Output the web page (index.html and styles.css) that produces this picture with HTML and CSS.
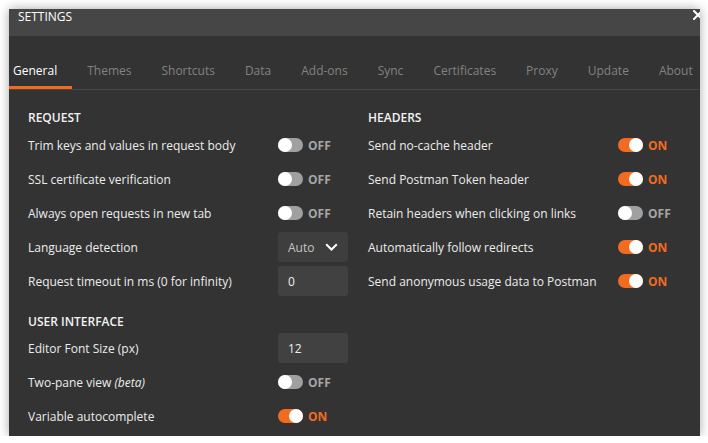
FILE: index.html
```html
<!DOCTYPE html>
<html>
<head>
<meta charset="utf-8">
<title>Settings</title>
<link rel="stylesheet" href="styles.css">
</head>
<body>
<div class="modal">
  <div class="modal-header">
    <span class="modal-title">SETTINGS</span>
    <svg class="close" width="10" height="10" viewBox="0 0 10 10"><path d="M1 1L9 9M9 1L1 9" stroke="#fff" stroke-width="2" stroke-linecap="square" fill="none"/></svg>
  </div>
  <nav class="tabs">
    <span class="tab active">General</span>
    <span class="tab">Themes</span>
    <span class="tab">Shortcuts</span>
    <span class="tab">Data</span>
    <span class="tab">Add-ons</span>
    <span class="tab">Sync</span>
    <span class="tab">Certificates</span>
    <span class="tab">Proxy</span>
    <span class="tab">Update</span>
    <span class="tab">About</span>
  </nav>
  <div class="content">
    <section class="col">
      <h3 class="section-title">REQUEST</h3>
      <div class="row"><span class="label">Trim keys and values in request body</span><span class="toggle"><span class="switch"><span class="knob"></span></span><span class="state">OFF</span></span></div>
      <div class="row"><span class="label">SSL certificate verification</span><span class="toggle"><span class="switch"><span class="knob"></span></span><span class="state">OFF</span></span></div>
      <div class="row"><span class="label">Always open requests in new tab</span><span class="toggle"><span class="switch"><span class="knob"></span></span><span class="state">OFF</span></span></div>
      <div class="row"><span class="label">Language detection</span><span class="select"><span class="select-value">Auto</span><svg class="chevron" width="13" height="8" viewBox="0 0 13 8"><path d="M1.2 1.2L6.5 6.5L11.8 1.2" stroke="#fff" stroke-width="2" fill="none"/></svg></span></div>
      <div class="row"><span class="label">Request timeout in ms (0 for infinity)</span><span class="input">0</span></div>
      <h3 class="section-title spaced">USER INTERFACE</h3>
      <div class="row"><span class="label">Editor Font Size (px)</span><span class="input">12</span></div>
      <div class="row"><span class="label">Two-pane view <em>(beta)</em></span><span class="toggle"><span class="switch"><span class="knob"></span></span><span class="state">OFF</span></span></div>
      <div class="row"><span class="label">Variable autocomplete</span><span class="toggle on"><span class="switch"><span class="knob"></span></span><span class="state">ON</span></span></div>
    </section>
    <section class="col">
      <h3 class="section-title">HEADERS</h3>
      <div class="row"><span class="label">Send no-cache header</span><span class="toggle on"><span class="switch"><span class="knob"></span></span><span class="state">ON</span></span></div>
      <div class="row"><span class="label">Send Postman Token header</span><span class="toggle on"><span class="switch"><span class="knob"></span></span><span class="state">ON</span></span></div>
      <div class="row"><span class="label">Retain headers when clicking on links</span><span class="toggle"><span class="switch"><span class="knob"></span></span><span class="state">OFF</span></span></div>
      <div class="row"><span class="label">Automatically follow redirects</span><span class="toggle on"><span class="switch"><span class="knob"></span></span><span class="state">ON</span></span></div>
      <div class="row"><span class="label">Send anonymous usage data to Postman</span><span class="toggle on"><span class="switch"><span class="knob"></span></span><span class="state">ON</span></span></div>
    </section>
  </div>
</div>
</body>
</html>
```

FILE: styles.css
```css
html, body {
  margin: 0;
  padding: 0;
  background: #ffffff;
}

body {
  font-family: "Open Sans", "Noto Sans", "Liberation Sans", sans-serif;
  font-size: 12px;
}

.modal {
  margin: 9px 0 0 9px;
  width: 691px;
  height: 427px;
  background: #333333;
  box-shadow: 0 0 10px rgba(0, 0, 0, 0.35);
  overflow: hidden;
  display: flex;
  flex-direction: column;
}

.modal-header {
  height: 27px;
  flex: 0 0 27px;
  background: #464646;
  display: flex;
  align-items: flex-start;
  padding-left: 9px;
}

.modal-title {
  color: #ffffff;
  line-height: 16px;
}

.close {
  margin-left: auto;
  margin-top: 1px;
  margin-right: -3px;
  flex: 0 0 10px;
}

.tabs {
  height: 53px;
  flex: 0 0 53px;
  display: flex;
  align-items: flex-end;
  border-bottom: 1px solid #474747;
  margin-left: -11px;
  white-space: nowrap;
}

.tab {
  color: #828282;
  line-height: 31px;
  padding: 0 15px;
  border-bottom: 3px solid transparent;
}

.tab.active {
  color: #ffffff;
  border-bottom-color: #f26b21;
}

.content {
  display: grid;
  grid-template-columns: 340px 340px;
  padding: 18px 0 0 19px;
}

.section-title {
  margin: 0;
  font-size: 12px;
  font-weight: 600;
  line-height: 20px;
  color: #f2f2f2;
}

.section-title.spaced {
  margin-top: 15px;
  line-height: 18px;
}

.row {
  display: flex;
  align-items: center;
  height: 34px;
}

.label {
  flex: 0 0 250px;
  color: #ececec;
  white-space: nowrap;
}

.toggle {
  display: flex;
  align-items: center;
}

.switch {
  width: 25px;
  height: 14px;
  border-radius: 7px;
  background: #a0a0a0;
  display: flex;
  align-items: center;
  justify-content: flex-start;
}

.knob {
  width: 14px;
  height: 14px;
  border-radius: 50%;
  background: #ffffff;
}

.state {
  margin-left: 5px;
  font-weight: 700;
  color: #a6a6a6;
}

.toggle.on .switch {
  background: #f26b21;
  justify-content: flex-end;
}

.toggle.on .state {
  color: #f26b21;
}

.select, .input {
  width: 70px;
  height: 30px;
  box-sizing: border-box;
  border-radius: 3px;
  padding: 0 10px;
  display: flex;
  align-items: center;
}

.select {
  background: #3e3e3e;
  justify-content: space-between;
}

.select-value {
  color: #c4c4c4;
}

.input {
  background: #414141;
  color: #eeeeee;
}
```
